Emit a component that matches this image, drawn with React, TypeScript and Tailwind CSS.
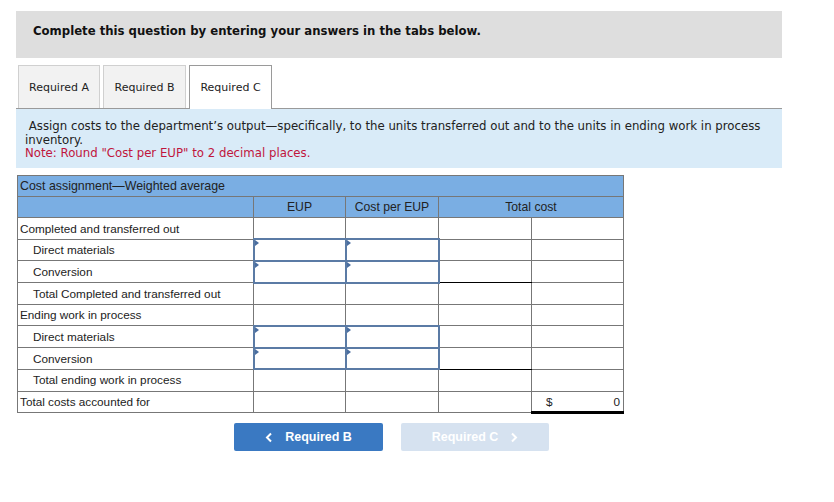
import React from 'react';

type Row = {
  label: string;
  indent?: boolean;
  input?: boolean;
  underline?: boolean;
  total?: boolean;
};

const rows: Row[] = [
  { label: 'Completed and transferred out' },
  { label: 'Direct materials', indent: true, input: true },
  { label: 'Conversion', indent: true, input: true, underline: true },
  { label: 'Total Completed and transferred out', indent: true },
  { label: 'Ending work in process' },
  { label: 'Direct materials', indent: true, input: true },
  { label: 'Conversion', indent: true, input: true, underline: true },
  { label: 'Total ending work in process', indent: true },
  { label: 'Total costs accounted for', total: true },
];

const InputCell = () => (
  <td className="relative border-2 border-[#5b7ba5] p-0 bg-white">
    <span className="absolute left-0 top-0 w-0 h-0 border-y-[3px] border-y-transparent border-l-[4px] border-l-[#4a6ea0]" />
  </td>
);

const App = () => {
  return (
    <div className="w-[834px] h-[502px] bg-white pl-4 pt-[11px] font-['DejaVu_Sans',sans-serif]">
      <div className="w-[766px] h-[47px] bg-[#dedede] flex items-center pl-[17px] pb-[5px]">
        <span className="text-[11.7px] font-bold text-[#111]">
          Complete this question by entering your answers in the tabs below.
        </span>
      </div>

      <div className="flex gap-[3px] pl-[2px] mt-[7px] h-[43px] items-end">
        <div className="w-[82px] h-[43px] bg-[#f2f2f2] border border-b-0 border-[#d0d0d0] flex items-center justify-center pt-[2px] text-[11px] text-[#222]">
          Required A
        </div>
        <div className="w-[83px] h-[43px] bg-[#f2f2f2] border border-b-0 border-[#d0d0d0] flex items-center justify-center pt-[2px] text-[11px] text-[#222]">
          Required B
        </div>
        <div className="w-[83px] h-[44px] bg-white border border-b-0 border-[#9a9a9a] flex items-center justify-center pt-[2px] text-[11px] text-[#222] -mb-px relative z-10">
          Required C
        </div>
      </div>

      <div className="w-[766px] h-[60px] bg-[#d9ebf8] border-t border-[#9a9a9a] pl-[9px] pr-3 pt-[11px] text-[11.75px] leading-[13.5px] text-[#222]">
        <div>&nbsp;Assign costs to the department’s output—specifically, to the units transferred out and to the units in ending work in process inventory.</div>
        <div className="text-[#c0153d]">Note: Round "Cost per EUP" to 2 decimal places.</div>
      </div>

      <table className="mt-[7px] ml-px border-collapse font-['Liberation_Sans',Arial,sans-serif] text-[11.75px] text-[#222]">
        <colgroup>
          <col className="w-[236px]" />
          <col className="w-[92px]" />
          <col className="w-[93px]" />
          <col className="w-[93px]" />
          <col className="w-[92px]" />
        </colgroup>
        <thead>
          <tr className="h-[21px] bg-[#7aaee3]">
            <td colSpan={5} className="border border-[#777] px-[2px] py-0 text-left text-[12.4px]">
              Cost assignment—Weighted average
            </td>
          </tr>
          <tr className="h-[21px] bg-[#7aaee3] text-[12.2px]">
            <td className="border border-[#777]" />
            <td className="border border-[#777] text-center">EUP</td>
            <td className="border border-[#777] text-center">Cost per EUP</td>
            <td colSpan={2} className="border border-[#777] text-center">Total cost</td>
          </tr>
        </thead>
        <tbody>
          {rows.map((r, i) => (
            <tr key={i} className="h-[21.7px]">
              <td className={`border border-[#777] py-0 ${r.indent ? 'pl-[15px]' : 'pl-[2px]'}`}>{r.label}</td>
              {r.input ? (
                <>
                  <InputCell />
                  <InputCell />
                </>
              ) : (
                <>
                  <td className="border border-[#777]" />
                  <td className="border border-[#777]" />
                </>
              )}
              <td className={`border border-[#777] ${r.underline ? 'border-b-black' : ''}`} />
              {r.total ? (
                <td className="border border-[#777] border-t-black border-b-[3px] border-b-black pl-[14px] pr-[3px]">
                  <div className="flex justify-between">
                    <span>$</span>
                    <span>0</span>
                  </div>
                </td>
              ) : (
                <td className="border border-[#777]" />
              )}
            </tr>
          ))}
        </tbody>
      </table>

      <div className="flex gap-[18px] ml-[218px] mt-[9px] font-['Liberation_Sans',Arial,sans-serif]">
        <div className="w-[149px] h-[28px] bg-[#3a79c2] text-white rounded-[2px] flex items-center justify-center gap-[12px] font-bold text-[12.5px]">
          <svg width="8" height="11" viewBox="0 0 8 11" fill="none">
            <path d="M6 1.5L2 5.5L6 9.5" stroke="white" strokeWidth="2" />
          </svg>
          <span>Required B</span>
        </div>
        <div className="w-[148px] h-[28px] bg-[#d6e2f0] text-white rounded-[2px] flex items-center justify-center gap-[12px] font-bold text-[12.5px]">
          <span>Required C</span>
          <svg width="8" height="11" viewBox="0 0 8 11" fill="none">
            <path d="M2 1.5L6 5.5L2 9.5" stroke="white" strokeWidth="2" />
          </svg>
        </div>
      </div>
    </div>
  );
};

export default App;
